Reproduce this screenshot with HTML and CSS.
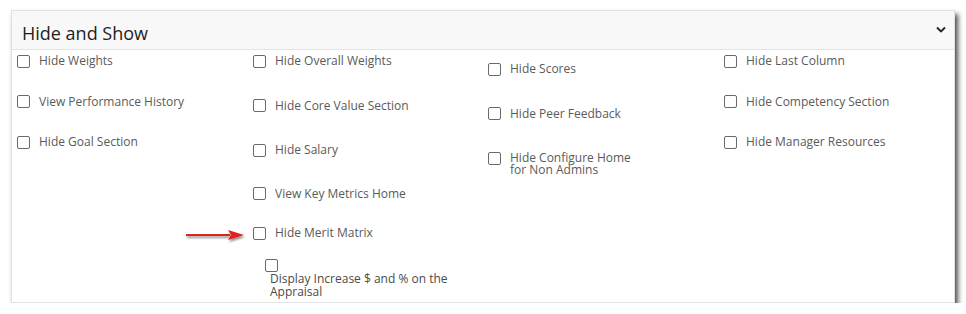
FILE: index.html
```html
<!DOCTYPE html>
<html>
	<head>
		<meta charset="UTF-8">
		<title>Hide and Show</title>
		<link rel="stylesheet" href="styles.css">
	</head>
	<body>
		<div class="panel">
			<div class="panel-head">
				<h2 class="title">Hide and Show</h2>
				<svg class="chevron" width="10" height="7" viewBox="0 0 10 7"><path d="M1 1.5 L5 5.5 L9 1.5" fill="none" stroke="#222" stroke-width="1.8"/></svg>
			</div>
			<div class="panel-body">
				<ul class="col col-a">
					<li class="item"><span class="box"></span><span class="label">Hide Weights</span></li>
					<li class="item"><span class="box"></span><span class="label">View Performance History</span></li>
					<li class="item"><span class="box"></span><span class="label">Hide Goal Section</span></li>
				</ul>
				<ul class="col col-b">
					<li class="item"><span class="box"></span><span class="label">Hide Overall Weights</span></li>
					<li class="item"><span class="box"></span><span class="label">Hide Core Value Section</span></li>
					<li class="item"><span class="box"></span><span class="label">Hide Salary</span></li>
					<li class="item tight"><span class="box"></span><span class="label">View Key Metrics Home</span></li>
					<li class="item tighter"><span class="box"></span><span class="label">Hide Merit Matrix</span></li>
					<li class="item stacked"><span class="box"></span><span class="label">Display Increase $ and % on the Appraisal</span></li>
				</ul>
				<ul class="col col-c">
					<li class="item"><span class="box"></span><span class="label">Hide Scores</span></li>
					<li class="item"><span class="box"></span><span class="label">Hide Peer Feedback</span></li>
					<li class="item"><span class="box"></span><span class="label">Hide Configure Home<br>for Non Admins</span></li>
				</ul>
				<ul class="col col-a">
					<li class="item"><span class="box"></span><span class="label">Hide Last Column</span></li>
					<li class="item"><span class="box"></span><span class="label">Hide Competency Section</span></li>
					<li class="item"><span class="box"></span><span class="label">Hide Manager Resources</span></li>
				</ul>
			</div>
			<svg class="arrow" width="66" height="20" viewBox="0 0 66 20">
				<defs>
					<filter id="sh" x="-20%" y="-50%" width="140%" height="200%">
						<feDropShadow dx="1" dy="2" stdDeviation="1.2" flood-color="#000" flood-opacity="0.45"/>
					</filter>
				</defs>
				<g filter="url(#sh)">
					<path d="M2 9 L46 9" stroke="#e0201c" stroke-width="2.2"/>
					<path d="M44 4 L60 9 L44 14 L47 9 Z" fill="#e0201c"/>
				</g>
			</svg>
		</div>
	</body>
</html>
```

FILE: styles.css
```css
*{
	padding: 0;
	margin: 0;
	box-sizing: border-box;
}
ul{
	list-style: none;
}
body{
	background: #fff;
	font-family: "Open Sans", "Liberation Sans", sans-serif;
}
.panel{
	position: relative;
	width: 944px;
	margin: 10px 11px 0;
	background: #fff;
	border: 1px solid #e2e2e2;
	box-shadow: 3px 4px 5px rgba(0,0,0,0.7);
}
.panel-head{
	display: flex;
	justify-content: space-between;
	align-items: center;
	height: 39px;
	padding: 0 8px 0 10px;
	background: #f8f8f8;
	border-bottom: 1px solid #e4e4e4;
}
.title{
	font-size: 18px;
	font-weight: 400;
	color: #1e1e1e;
	line-height: 24px;
	padding-top: 6px;
}
.chevron{
	display: block;
	margin-top: -2px;
}
.panel-body{
	display: grid;
	grid-template-columns: 236px 235px 236px 1fr;
	padding: 5px 0 4px 5px;
}
.col{
	display: flex;
	flex-direction: column;
}
.col-a{
	gap: 28px;
}
.col-b{
	gap: 32px;
}
.col-c{
	gap: 32px;
	padding-top: 8px;
}
.item{
	display: flex;
	align-items: flex-start;
	gap: 9px;
	font-size: 12px;
	line-height: 12px;
	color: #5a5a5a;
}
.item.tight{
	margin-top: -1px;
}
.item.tighter{
	margin-top: -5px;
}
.box{
	flex: none;
	width: 13px;
	height: 13px;
	margin-top: -0.5px;
	border: 1px solid #6a6a6a;
	border-radius: 2px;
	background: #fff;
}
.item.stacked{
	display: block;
	margin-top: -13px;
	padding-left: 12px;
	line-height: 13px;
	color: #4a4a4a;
}
.item.stacked .box{
	display: block;
	margin-top: 0;
}
.item.stacked .label{
	display: block;
	max-width: 190px;
	padding-left: 5px;
}
.arrow{
	position: absolute;
	left: 172px;
	top: 215px;
}
```
